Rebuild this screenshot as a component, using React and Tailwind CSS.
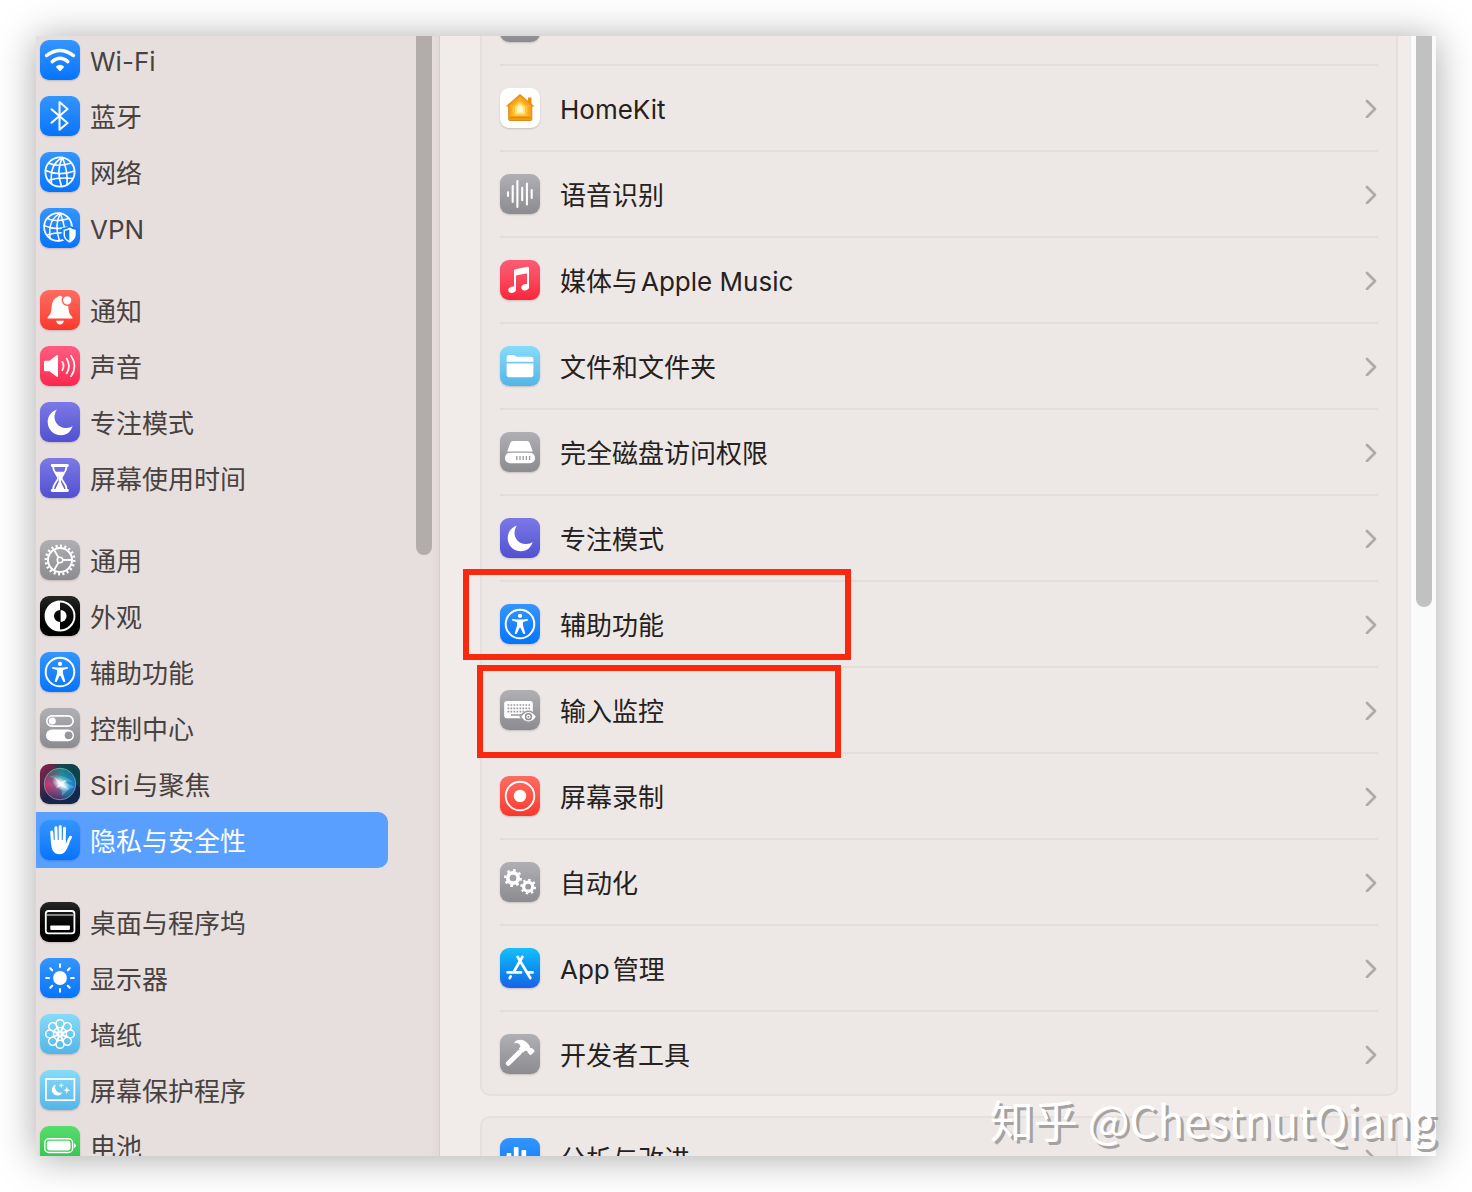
import React from "react";

const tones = {
  blue: "bg-linear-to-b from-[#3395ff] to-[#0374fb]",
  red: "bg-linear-to-b from-[#ff6b60] to-[#fb362c]",
  pink: "bg-linear-to-b from-[#ff5c80] to-[#fb2450]",
  indigo: "bg-linear-to-b from-[#7c79e6] to-[#5250d0]",
  gray: "bg-linear-to-b from-[#b0b0b4] to-[#8b8b90]",
  black: "bg-linear-to-b from-[#262626] to-[#000000]",
  cyan: "bg-linear-to-b from-[#86dcf8] to-[#52b5e8]",
  green: "bg-linear-to-b from-[#57dd6c] to-[#2cc04a]",
  white: "bg-white",
  music: "bg-linear-to-b from-[#fb5c74] to-[#fa233b]",
  store: "bg-linear-to-b from-[#18bffb] to-[#1a62e6]",
  siri: "bg-linear-to-br from-[#8c1848] via-[#1d2348] to-[#0a2a50]",
};

const line = { fill: "none", stroke: "#fff", strokeLinecap: "round", strokeLinejoin: "round" };
const eight = [0, 45, 90, 135, 180, 225, 270, 315];

const Globe = () => (
  <g {...line} strokeWidth="1.6">
    <circle cx="20" cy="20" r="14.6" strokeWidth="1.8" />
    <path d="M22.500 5.700C14 9.500 10 17 11.500 31.500" />
    <path d="M22.500 5.700C18.500 13 17.500 23 21.500 34.500" />
    <path d="M22.500 5.700C25.500 13 28 21 27 32.500" />
    <path d="M8.500 11Q17 15.500 31.500 11" />
    <path d="M5.500 18.500Q19 24.500 34.500 19" />
    <path d="M8 28.500Q19 25 33 26.500" />
  </g>
);

const Moon = () => (
  <path
    fill="#fff"
    d="M17 7.400C10.500 9.500 7.600 15 7.700 20.500C8 28 14 33.200 21 33.200C27 33.200 31 29.500 32.600 24C31 25.200 28.500 26.200 25.500 26C18.500 25.700 14.300 20 14.500 14.500C14.600 11.500 15.800 9 17 7.400Z"
  />
);

const Person = () => (
  <>
    <circle cx="20" cy="20" r="14.300" fill="none" stroke="#fff" strokeWidth="2" />
    <circle cx="20" cy="11.900" r="2.100" fill="#fff" />
    <path
      fill="#fff"
      d="M12.600 14.900Q20 16.200 27.400 14.900Q28.600 15.400 27.900 16.600L23 17.900V21.500L25.300 29.200Q24.700 30.600 23.300 29.800L20.400 23.800H19.600L16.700 29.800Q15.300 30.600 14.700 29.200L17 21.500V17.900L12.100 16.600Q11.400 15.400 12.600 14.900Z"
    />
  </>
);

const Cog = ({ cx, cy, r }) => (
  <g fill="none" stroke="#fff">
    <circle cx={cx} cy={cy} r={r * 0.58} strokeWidth={r * 0.42} />
    <circle cx={cx} cy={cy} r={r * 0.86} strokeWidth={r * 0.28} pathLength="16" strokeDasharray="0.9 1.1" />
  </g>
);

const glyphs = {
  wifi: (
    <>
      <g {...line} strokeWidth="3.400">
        <path d="M6.500 15.600Q20 5.400 33.500 15.600" />
        <path d="M12.200 21.600Q20 15 27.800 21.600" />
      </g>
      <path fill="#fff" d="M15.700 26.800Q20 22.800 24.300 26.800L21 30.400Q20 31.400 19 30.400Z" />
    </>
  ),
  bluetooth: <path {...line} strokeWidth="2" d="M11.500 13.300L27.500 27L19.500 33.800V6L27.500 13L11.500 26.700" />,
  network: <Globe />,
  vpn: (
    <>
      <g transform="translate(-1 0) scale(.95)">
        <Globe />
      </g>
      <path fill="#fff" stroke="#107dfc" strokeWidth="1.800" d="M29.600 18.200Q32.500 20.500 36.600 21V27Q36.600 32.500 29.600 35.800Q22.600 32.500 22.600 27V21Q26.700 20.500 29.600 18.200Z" />
      <path fill="#107dfc" d="M29.300 21.600Q27.500 22.600 25 23V27Q25 30.600 29.300 32.800Z" />
    </>
  ),
  bell: (
    <>
      <path fill="#fff" d="M7.500 28.600Q7 27 9.500 25Q11.300 23 11.700 16.500Q12.200 8.500 17.600 7Q20 4.500 22.400 7Q27.800 8.500 28.300 16.500Q28.700 23 30.500 25Q33 27 32.500 28.600Z" />
      <path fill="#fff" d="M16 30.800H24Q23 34.500 20 34.500Q17 34.500 16 30.800Z" />
      <circle cx="27.200" cy="10.300" r="4.900" fill="#fff" stroke="#fd6056" strokeWidth="1.500" />
    </>
  ),
  sound: (
    <>
      <path fill="#fff" d="M4 16Q4 14.700 5.200 14.700H9.500L16.300 9.400Q18 8.500 18 10.300V29.700Q18 31.500 16.300 30.600L9.500 25.300H5.200Q4 25.300 4 24Z" />
      <g {...line} strokeWidth="1.700">
        <path d="M22.300 15.800Q24.800 20 22.300 24.200" />
        <path d="M26.700 12.600Q31.200 20 26.700 27.400" />
        <path d="M31 9.600Q38 20 31 30.400" />
      </g>
    </>
  ),
  moon: <Moon />,
  hourglass: (
    <>
      <rect x="10.800" y="6" width="18" height="3" rx="1.400" fill="#fff" />
      <rect x="10.800" y="31" width="18" height="3" rx="1.400" fill="#fff" />
      <path {...line} strokeWidth="1.800" d="M13 8C13 15 18 16.500 18 20C18 23.500 13 25 13 32H26.600C26.600 25 21.600 23.500 21.600 20C21.600 16.500 26.600 15 26.600 8" />
      <path fill="#fff" d="M14.500 13.800H25.200L21 18.800V24L24.300 31H15.300L18.700 24V18.800Z" />
    </>
  ),
  gear: (
    <g fill="none" stroke="#fff">
      <circle cx="20" cy="20" r="12" strokeWidth="2" />
      <circle cx="20" cy="20" r="14.200" strokeWidth="2.600" pathLength="40" strokeDasharray="0.900 1.100" />
      <circle cx="20" cy="20" r="2.700" strokeWidth="1.600" />
      <path strokeWidth="1.800" d="M22.700 20H32M18.600 17.700L14 9.600M18.600 22.300L14 30.400" />
    </g>
  ),
  appearance: (
    <>
      <circle cx="20" cy="20" r="14.500" fill="none" stroke="#fff" strokeWidth="1.900" />
      <path fill="#fff" d="M20 5.500A14.500 14.500 0 0 0 20 34.500V26A6 6 0 0 1 20 14Z" />
      <path fill="#fff" d="M20.600 14A6 6 0 0 1 20.600 26Z" />
    </>
  ),
  access: <Person />,
  control: (
    <>
      <rect x="6.800" y="7.800" width="26.400" height="10.400" rx="5.200" fill="none" stroke="#fff" strokeWidth="1.700" />
      <circle cx="12.300" cy="13" r="3.500" fill="#fff" />
      <rect x="6" y="21.400" width="28" height="11.800" rx="5.900" fill="#fff" />
      <circle cx="28.600" cy="27.300" r="3.900" fill="#97979b" />
    </>
  ),
  siri: (
    <>
      <defs>
        <linearGradient id="siriOrb" x1="0" y1=".6" x2="1" y2=".4">
          <stop offset="0" stopColor="#d02a6c" />
          <stop offset=".4" stopColor="#a0608c" />
          <stop offset=".62" stopColor="#38a8c8" />
          <stop offset="1" stopColor="#1a74cc" />
        </linearGradient>
        <radialGradient id="siriGlow">
          <stop offset="0" stopColor="#fff" />
          <stop offset=".35" stopColor="#eef8ff" stopOpacity=".85" />
          <stop offset="1" stopColor="#fff" stopOpacity="0" />
        </radialGradient>
        <linearGradient id="siriShade" x1="0" y1="0" x2="0" y2="1">
          <stop offset="0" stopColor="#0c7a64" stopOpacity=".75" />
          <stop offset=".5" stopColor="#0c4a6a" stopOpacity="0" />
          <stop offset="1" stopColor="#241a5c" stopOpacity=".7" />
        </linearGradient>
      </defs>
      <path fill="#06504c" opacity=".75" d="M14 0H40V24Z" />
      <circle cx="20" cy="20" r="15.800" fill="url(#siriOrb)" />
      <circle cx="20" cy="20" r="15.800" fill="url(#siriShade)" stroke="#8fc4bc" strokeOpacity=".65" strokeWidth=".9" />
      <path fill="#7ff0d0" opacity=".3" d="M9 13Q20 8 33 18Q24 17 20 20Q15 14 9 13Z" />
      <path fill="#8ccfff" opacity=".4" d="M20 20Q28 18 34 23Q27 26 22 32Q22 25 20 20Z" />
      <ellipse cx="21" cy="20" rx="10" ry="6" fill="url(#siriGlow)" transform="rotate(32 21 20)" />
      <path fill="#fff" opacity=".6" d="M14.500 13.500L21 18L27 15.500L23.500 20L28.500 25.500L21.500 22L16 24L19 20Z" />
    </>
  ),
  hand: (
    <>
      <g {...line} strokeWidth="3">
        <path d="M11.700 12L12.500 23M15.900 7.800L16.300 22M20.200 6.500V22M24.500 8.200L24.200 22" />
        <path strokeWidth="2.900" d="M30.500 17.200Q29 19 27.500 24" />
      </g>
      <path fill="#fff" d="M11 20H25.700V23.500L29 22Q28 28 25.500 31Q23.500 34.200 19.500 34.200Q14.500 34.200 12.500 30Q11 27 11 20Z" />
    </>
  ),
  dock: (
    <>
      <rect x="5.800" y="9" width="28.600" height="22.400" rx="2.600" fill="none" stroke="#fff" strokeWidth="1.800" />
      <path stroke="#aaa" strokeWidth="1.300" d="M7 13H33.500" />
      <rect x="10.300" y="23.500" width="19.600" height="4.400" rx=".8" fill="#fff" />
    </>
  ),
  display: (
    <>
      <circle cx="20" cy="20" r="6.900" fill="#fff" />
      {eight.map((a) => (
        <path key={a} {...line} strokeWidth="2" d="M20 6.200V9" transform={`rotate(${a} 20 20)`} />
      ))}
    </>
  ),
  wallpaper: (
    <>
      {eight.map((a) => (
        <g key={a} {...line} strokeWidth="1.500" transform={`rotate(${a} 20 20)`}>
          <circle cx="20" cy="9.700" r="4" />
          <path d="M16.800 12.500L20 18.500L23.200 12.500" />
        </g>
      ))}
    </>
  ),
  screensaver: (
    <>
      <rect x="6" y="9" width="28.400" height="21.200" fill="none" stroke="#fff" strokeWidth="1.700" />
      <path fill="#fff" d="M15.600 14.500A5.700 5.700 0 1 0 22.500 22.500Q18 23.500 16 20.500Q14.400 17.500 15.600 14.500Z" />
      <path fill="#fff" d="M21.300 12.700L22 14.800L24 15.500L22 16.200L21.300 18.300L20.600 16.200L18.600 15.500L20.600 14.800ZM26.800 16.500L27.700 19.300L30.300 20.200L27.700 21.100L26.800 23.900L25.900 21.100L23.300 20.200L25.900 19.300Z" />
    </>
  ),
  battery: (
    <>
      <rect x="4.800" y="12.700" width="27.800" height="13.800" rx="4" fill="none" stroke="#fff" strokeWidth="1.400" />
      <rect x="6.900" y="14.800" width="23.600" height="9.600" rx="2.300" fill="#fff" />
      <path fill="#fff" d="M34 17.200Q36 17.800 36 19.600Q36 21.400 34 22Z" />
    </>
  ),
  home: (
    <>
      <path fill="#e58f14" d="M28 9.500H31.500V17H28Z" />
      <path fill="#f0991b" stroke="#e08a12" strokeWidth="1" strokeLinejoin="round" d="M20 6.500L33.500 18H31.800V31.500Q31.800 32.500 30.800 32.500H9.700Q8.700 32.500 8.700 31.500V18H6.700Z" />
      <path fill="#fba81c" d="M20 8.500L30.500 17.700V29H10V17.700Z" />
      <path fill="#ffc531" d="M20 12L27.500 18.500V28H12.500V18.500Z" />
      <path fill="#ffe27a" d="M20 14.500L25 19V26.500H15V19Z" />
      <path fill="#fff7d8" d="M20 16.800L22.800 19.500V24.500H17.200V19.500Z" />
      <path stroke="#d98410" strokeWidth="1" d="M10 29.300H30.500" />
    </>
  ),
  voice: (
    <path {...line} strokeWidth="2.100" d="M8 18.200V22M12.700 12V28M17.400 7V33M22.200 13.700V26.300M26.900 9.500V30.500M31.700 16V24" />
  ),
  music: (
    <>
      <path fill="#fff" d="M14 10.600Q14 9.500 15.100 9.200L27.500 6.700Q29 6.500 29 8V27H27V13.200L16 15.500V30H14Z" />
      <ellipse cx="12.200" cy="29.800" rx="3.900" ry="3.100" fill="#fff" transform="rotate(-18 12.200 29.800)" />
      <ellipse cx="25.200" cy="27.300" rx="3.900" ry="3.100" fill="#fff" transform="rotate(-18 25.200 27.300)" />
    </>
  ),
  folder: (
    <>
      <path fill="#fff" d="M6.600 15.800V11.500Q6.600 9 9 9H13.500Q14.700 9 15.700 9.900Q16.500 10.800 17.800 10.800H31Q33.400 10.800 33.400 13.200V15.800Z" />
      <path fill="#fff" d="M6.600 17.400H33.400V28.600Q33.400 31.200 30.800 31.200H9.200Q6.600 31.200 6.600 28.600Z" />
    </>
  ),
  disk: (
    <>
      <path fill="#fff" d="M10.300 11Q11 9 13 9H27Q29 9 29.700 11L32.800 19.500H7.200Z" />
      <rect x="5" y="20.800" width="30" height="10.400" rx="5" fill="#fff" />
      <path stroke="#97979b" strokeWidth="1.300" d="M16.800 24V28M20 24V28M23.200 24V28M26.400 24V28M29.600 24V28" />
    </>
  ),
  keyboard: (
    <>
      <rect x="4.200" y="11" width="28.600" height="17.200" rx="2.600" fill="#fff" />
      <g stroke="#98989c" strokeWidth="1.700" strokeDasharray="1.700 1.300">
        <path d="M7.500 15H30M7.500 18.300H30M7.500 21.600H24" />
      </g>
      <path stroke="#98989c" strokeWidth="1.600" d="M11 25H21" />
      <path fill="#fff" stroke="#98989c" strokeWidth="1.500" d="M20.300 26.700Q24 21.200 28.500 21.200Q33 21.200 36.700 26.700Q33 32.200 28.500 32.200Q24 32.200 20.300 26.700Z" />
      <circle cx="28.500" cy="26.700" r="2.900" fill="#fff" stroke="#8f8f94" strokeWidth="1.500" />
      <circle cx="28.500" cy="26.700" r="1" fill="#8f8f94" />
    </>
  ),
  record: (
    <>
      <circle cx="20" cy="20" r="14.300" fill="none" stroke="#fff" strokeWidth="1.900" />
      <circle cx="20" cy="20" r="6.200" fill="#fff" />
    </>
  ),
  automation: (
    <>
      <Cog cx={13} cy={16} r={9} />
      <Cog cx={28.200} cy={24.700} r={7.900} />
    </>
  ),
  store: (
    <g {...line} strokeWidth="2.700">
      <path d="M22.300 9L13.700 24M17.700 9L30.300 30M7.600 24.400H21M27.500 24.400H32.600M10.700 28.300L9.700 30" />
    </g>
  ),
  hammer: (
    <>
      <path {...line} strokeWidth="4.800" d="M8.300 29.400L19.500 18.300" />
      <path fill="#fff" d="M14.300 9.200Q14 8 16 6.800Q21.500 4.300 26 7.800L29.300 11.200Q30 12 29.800 13.300Q30.800 14.500 32 14L34.300 16.200Q34.800 17 34.300 17.700L31.300 20.700Q30.500 21.200 29.800 20.700L27.700 18.500Q28 17.200 26.800 16.700L24.800 17L22.800 18.800L18.700 14.700L20.500 12.500Q19.500 8.500 14.300 9.200Z" />
    </>
  ),
  analytics: (
    <g fill="#fff">
      <rect x="6.600" y="15" width="4.700" height="17" rx=".8" />
      <rect x="13.800" y="9" width="4.700" height="23" rx=".8" />
      <rect x="21.500" y="12" width="4.700" height="20" rx=".8" />
    </g>
  ),
  blank: null,
};

const Tile = ({ icon, tone }) => (
  <span className={`block size-10 shrink-0 overflow-hidden rounded-[9px] shadow-[0_1px_2px_rgba(0,0,0,0.18)] ${tones[tone]}`}>
    <svg viewBox="0 0 40 40" className="size-10" aria-hidden="true">
      {glyphs[icon]}
    </svg>
  </span>
);

const sidebarGroups = [
  [
    ["wifi", "blue", "Wi-Fi"],
    ["bluetooth", "blue", "蓝牙"],
    ["network", "blue", "网络"],
    ["vpn", "blue", "VPN"],
  ],
  [
    ["bell", "red", "通知"],
    ["sound", "pink", "声音"],
    ["moon", "indigo", "专注模式"],
    ["hourglass", "indigo", "屏幕使用时间"],
  ],
  [
    ["gear", "gray", "通用"],
    ["appearance", "black", "外观"],
    ["access", "blue", "辅助功能"],
    ["control", "gray", "控制中心"],
    ["siri", "siri", "Siri", "与聚焦"],
    ["hand", "blue", "隐私与安全性"],
  ],
  [
    ["dock", "black", "桌面与程序坞"],
    ["display", "blue", "显示器"],
    ["wallpaper", "cyan", "墙纸"],
    ["screensaver", "cyan", "屏幕保护程序"],
    ["battery", "green", "电池"],
  ],
];

const permissions = [
  ["blank", "gray"],
  ["home", "white", "HomeKit"],
  ["voice", "gray", "语音识别"],
  ["music", "music", "媒体与", "Apple Music"],
  ["folder", "cyan", "文件和文件夹"],
  ["disk", "gray", "完全磁盘访问权限"],
  ["moon", "indigo", "专注模式"],
  ["access", "blue", "辅助功能"],
  ["keyboard", "gray", "输入监控"],
  ["record", "red", "屏幕录制"],
  ["automation", "gray", "自动化"],
  ["store", "store", "App", "管理"],
  ["hammer", "gray", "开发者工具"],
];

const marks = {
  access: "-left-[37px] -top-[13px] h-[91px] w-[388px]",
  keyboard: "-left-[23px] -top-[3px] h-[93px] w-[364px]",
};

const Label = ({ parts }) => (
  <span className="flex gap-[3px] whitespace-nowrap pt-[3px]">
    {parts.map((p) => (
      <span key={p}>{p}</span>
    ))}
  </span>
);

const SidebarItem = ({ item: [icon, tone, ...parts] }) => {
  const active = icon === "hand";
  return (
    <li>
      <a
        href="#"
        aria-current={active ? "page" : undefined}
        className={`flex h-14 items-center gap-[10px] rounded-r-[10px] pl-1 ${active ? "bg-[#589fff] text-white" : "text-[#474240]"}`}
      >
        <Tile icon={icon} tone={tone} />
        <Label parts={parts} />
      </a>
    </li>
  );
};

const PermissionRow = ({ item: [icon, tone, ...parts] }) => (
  <li className="relative border-b-2 border-[#e3dedc] last:border-b-0">
    <button type="button" className="flex h-[84px] w-full items-center gap-5 text-left">
      <Tile icon={icon} tone={tone} />
      <Label parts={parts} />
      <svg viewBox="0 0 14 20" className="ml-auto h-5 w-[14px]" aria-hidden="true">
        <path d="M3 3L11 11L3 19" fill="none" stroke="#aeaaa8" strokeWidth="2.600" strokeLinecap="round" strokeLinejoin="round" />
      </svg>
    </button>
    {marks[icon] && <span className={`pointer-events-none absolute z-10 border-[6px] border-[#f8290d] ${marks[icon]}`} />}
  </li>
);

const Card = ({ items }) => (
  <ul className="rounded-[10px] bg-[#ede8e6] px-5 shadow-[inset_0_0_0_2px_#e5e0de]">
    {items.map((item) => (
      <PermissionRow key={item[0]} item={item} />
    ))}
  </ul>
);

export default function App() {
  return (
    <div className="h-screen overflow-hidden bg-white p-9 font-['Inter','Noto_Sans_CJK_SC',sans-serif] text-[26px] leading-9">
      <div className="relative flex h-full shadow-[0_2px_36px_rgba(0,0,0,0.34)]">
        <aside className="flex w-[404px] shrink-0 justify-between overflow-hidden border-r border-[#d3cdcb] bg-[#e7dfde]">
          <nav className="-mt-1 flex w-[352px] flex-col gap-[26px]" aria-label="设置">
            {sidebarGroups.map((group) => (
              <ul key={group[0][0]}>
                {group.map((item) => (
                  <SidebarItem key={item[0]} item={item} />
                ))}
              </ul>
            ))}
          </nav>
          <div className="flex w-[23px] justify-start bg-linear-to-r from-[#e7dfde] from-60% to-[#e1dad8]">
            <div className="h-[519px] w-4 rounded-b-full bg-[#b2acab]" />
          </div>
        </aside>
        <main className="min-w-0 flex-1 overflow-hidden bg-[#f1ecea] pl-10 pr-[11px] text-[#242120]">
          <div className="-mt-14 flex flex-col gap-5">
            <Card items={permissions} />
            <Card items={[["analytics", "blue", "分析与改进"]]} />
          </div>
        </main>
        <div className="w-[27px] shrink-0 border-l-2 border-[#ebebeb] bg-[#fafafa] pl-[5px]">
          <div className="h-[571px] w-4 rounded-b-full bg-[#c1c1c1]" />
        </div>
        <p className="pointer-events-none absolute bottom-0 right-0 whitespace-nowrap pb-1 font-['Noto_Sans_CJK_SC',sans-serif] text-[44px] leading-[66px] text-white [text-shadow:3px_3px_0_#a5a2a1]">
          知乎 @ChestnutQiang
        </p>
      </div>
    </div>
  );
}
